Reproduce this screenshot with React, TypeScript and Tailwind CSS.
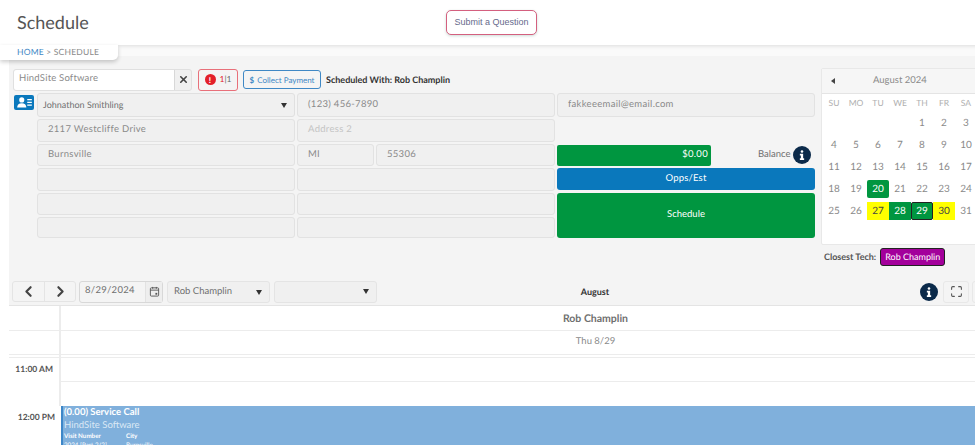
import { ChevronLeft, ChevronRight, Maximize, X } from "lucide-react";

function Field({ children, muted, className = "" }: { children?: string; muted?: boolean; className?: string }) {
  return (
    <div className={`flex items-center rounded-[3px] border border-[#e2e2e2] bg-[#f0f0f0] pl-[10px] text-[9.5px] tracking-[0.3px] ${muted ? "text-[#c4c4c4]" : "text-[#8a8a8a]"} ${className}`}>
      {children}
    </div>
  );
}

function Caret({ className = "" }: { className?: string }) {
  return <span className={`h-0 w-0 border-x-[3.5px] border-t-[5px] border-x-transparent border-t-[#333] ${className}`} />;
}

function InfoIcon() {
  return (
    <span className="flex size-[18px] shrink-0 items-center justify-center rounded-full bg-[#0b2a4a]">
      <svg viewBox="0 0 10 14" className="h-[10px] w-[8px]" fill="#fff">
        <circle cx="5" cy="2" r="1.8" />
        <path d="M2 5.4h4.6v6.2H8V14H2v-2.4h1.4V7.8H2z" />
      </svg>
    </span>
  );
}

const cells: { d: string; c?: string }[][] = [
  [{ d: "" }, { d: "" }, { d: "" }, { d: "" }, { d: "1" }, { d: "2" }, { d: "3" }],
  [{ d: "4" }, { d: "5" }, { d: "6" }, { d: "7" }, { d: "8" }, { d: "9" }, { d: "10" }],
  [{ d: "11" }, { d: "12" }, { d: "13" }, { d: "14" }, { d: "15" }, { d: "16" }, { d: "17" }],
  [{ d: "18" }, { d: "19" }, { d: "20", c: "rounded-[2px] bg-[#009640] text-white" }, { d: "21" }, { d: "22" }, { d: "23" }, { d: "24" }],
  [
    { d: "25" },
    { d: "26" },
    { d: "27", c: "bg-[#ffff00] text-[#444]" },
    { d: "28", c: "bg-[#009640] text-white" },
    { d: "29", c: "rounded-[2px] border border-[#222] bg-[#009640] text-white" },
    { d: "30", c: "bg-[#ffff00] text-[#444]" },
    { d: "31" },
  ],
];

function Calendar() {
  return (
    <div className="w-[170px] shrink-0">
      <div className="h-[177px] rounded-[2px] border border-[#e8e8e8] bg-white">
        <div className="flex h-[25px] items-center border-b border-[#e4e4e4] bg-[#f6f6f6] pl-[9px] text-[9.5px] text-[#8a8a8a]">
          <span className="h-0 w-0 border-y-[3px] border-r-[4px] border-y-transparent border-r-[#444]" />
          <span className="ml-[38px]">August 2024</span>
        </div>
        <div className="grid grid-cols-[repeat(7,22px)] pl-px pt-px">
          {["SU", "MO", "TU", "WE", "TH", "FR", "SA"].map((d) => (
            <div key={d} className="flex h-[16px] items-center justify-center text-[8.5px] text-[#b0b0b0]">{d}</div>
          ))}
        </div>
        <div className="grid grid-cols-[repeat(7,22px)] auto-rows-[18px] gap-y-1 pl-px pt-[3px]">
          {cells.flat().map((c, i) => (
            <div key={i} className={`flex items-center justify-center text-[10px] ${c.c ?? "text-[#8a8a8a]"}`}>{c.d}</div>
          ))}
        </div>
      </div>
      <div className="mt-[3px] flex items-center pl-[3px] text-[9px] font-bold text-[#555]">
        <span>Closest Tech:</span>
        <span className="ml-1 rounded-[3px] border border-[#222] bg-[#a3009b] px-[4px] py-px text-[9px] font-normal text-white">Rob Champlin</span>
      </div>
    </div>
  );
}

function CustomerForm() {
  return (
    <div className="flex w-[802px] shrink-0">
      <div className="w-6 shrink-0 pl-px pt-[2px]">
        <div className="flex h-[15px] w-[20px] items-center justify-center gap-px rounded-[2px] bg-[#0a78bc]">
          <svg viewBox="0 0 16 12" className="h-[11px] w-[15px]" fill="#fff">
            <circle cx="5" cy="3.2" r="2.8" />
            <path d="M0 11.5c0-3 2-4.6 5-4.6s5 1.6 5 4.6z" />
            <path d="M11 2.2h5v1.4h-5zM11 5.2h5v1.4h-5zM11 8.2h5v1.4h-5z" />
          </svg>
        </div>
      </div>
      <div className="grid w-[778px] grid-cols-[258px_258px_258px] grid-rows-[24px_23px_22px_23px_22px_21px] gap-x-[2px] gap-y-[2px]">
        <div className="flex items-center justify-between rounded-[3px] border border-[#e0e0e0] bg-[#f0f0f0] pl-[5px] pr-[7px] text-[9px] text-[#707070]">
          Johnathon Smithling
          <Caret />
        </div>
        <Field>(123) 456-7890</Field>
        <Field>fakkeeemail@email.com</Field>
        <Field>2117 Westcliffe Drive</Field>
        <Field muted>Address 2</Field>
        <div />
        <Field>Burnsville</Field>
        <div className="flex gap-[2px]">
          <Field className="w-[77px]">MI</Field>
          <Field className="flex-1">55306</Field>
        </div>
        <div className="flex items-center">
          <div className="flex h-[21px] w-[154px] items-center justify-end rounded-[2px] bg-[#009640] pr-[3px] text-[9.5px] tracking-[0.3px] text-white">$0.00</div>
          <span className="ml-[47px] w-[35px] text-[9.5px] text-[#707070]">Balance</span>
          <InfoIcon />
        </div>
        <Field />
        <Field />
        <div className="flex h-[22px] items-center justify-center rounded-[3px] bg-[#0a78bc] text-[9.5px] tracking-[0.2px] text-white">Opps/Est</div>
        <Field />
        <Field />
        <div className="row-span-2 flex items-center justify-center rounded-[3px] bg-[#009640] text-[9.5px] text-white">Schedule</div>
        <Field />
        <Field />
      </div>
    </div>
  );
}

function Toolbar() {
  return (
    <div className="flex h-[23px] items-center pl-[3px]">
      <div className="flex h-[21px] w-[64px] rounded-[3px] border border-[#e4e4e4] bg-[#f4f4f4] text-[#444]">
        <span className="flex w-[32px] items-center justify-center border-r border-[#e4e4e4]"><ChevronLeft size={17} strokeWidth={3} /></span>
        <span className="flex flex-1 items-center justify-center"><ChevronRight size={17} strokeWidth={3} /></span>
      </div>
      <div className="ml-[3px] flex h-[22px] w-[84px] items-center rounded-[3px] border border-[#d8d8d8] bg-[#f4f4f4]">
        <span className="flex-1 pl-[5px] text-[9.5px] tracking-[0.3px] text-[#707070]">8/29/2024</span>
        <span className="flex h-full w-[17px] items-center justify-center border-l border-[#e2e2e2] bg-[#eeeeee]">
          <svg viewBox="0 0 12 12" className="size-[11px]" fill="none" stroke="#555" strokeWidth="1">
            <rect x="1.5" y="2" width="9" height="9" rx="1" />
            <path d="M1.5 4.5h9M4 1v2M8 1v2" />
            <rect x="7" y="7.5" width="2" height="2" fill="#555" stroke="none" />
          </svg>
        </span>
      </div>
      <div className="ml-1 flex h-[22px] w-[103px] items-center justify-between rounded-[3px] border border-[#e4e4e4] bg-[#f0f0f0] pl-[6px] pr-[7px] pt-px text-[9.5px] text-[#707070]">
        Rob Champlin
        <Caret />
      </div>
      <div className="ml-1 flex h-[22px] w-[103px] items-center justify-end rounded-[3px] border border-[#e4e4e4] bg-[#f0f0f0] pr-[7px]">
        <Caret />
      </div>
      <div className="w-[436px] text-center text-[9px] font-bold text-[#333]">August</div>
      <div className="ml-[107px] flex items-center">
        <InfoIcon />
        <div className="ml-[5px] flex h-[22px] w-[26px] items-center justify-center rounded-[3px] border border-[#e8e8e8] bg-[#f4f4f4]">
          <Maximize size={13} strokeWidth={2} className="text-[#555]" />
        </div>
        <div className="ml-[3px] h-[22px] w-[26px] shrink-0 rounded-[3px] border border-[#e8e8e8] bg-[#f4f4f4]" />
      </div>
    </div>
  );
}

function ScheduleGrid() {
  return (
    <div className="grid grid-cols-[52px_1fr] border-t border-[#e4e4e4] bg-white">
      <div className="h-[25px] border-r-2 border-b border-[#ececec]" />
      <div className="flex h-[25px] items-center justify-center border-b border-[#ececec] pt-[3px] text-[10.5px] font-bold text-[#707070]">Rob Champlin</div>
      <div className="h-[24px] border-r-2 border-b border-[#ececec]" />
      <div className="flex h-[24px] items-center justify-center border-b border-[#ececec] text-[9.5px] text-[#8a8a8a]">Thu 8/29</div>
      <div className="h-[3px] border-r-2 border-b border-[#ececec]" />
      <div className="h-[3px] border-b border-[#ececec]" />
      <div className="h-[48px] whitespace-nowrap border-r-2 border-[#ececec] pr-[6px] pt-[5px] text-right text-[8.5px] font-bold text-[#555]">11:00 AM</div>
      <div className="h-[48px]">
        <div className="h-[24px] border-b border-[#ececec]" />
      </div>
      <div className="h-[39px] whitespace-nowrap pr-[6px] pt-[5px] text-right text-[8.5px] font-bold text-[#555]">12:00 PM</div>
      <div className="h-[39px] overflow-hidden border-l-2 border-[#3d87c8] bg-[#80b0dc] pl-px text-white">
        <div className="text-[9.5px] font-bold leading-[13px]">(0.00) Service Call</div>
        <div className="text-[9.5px] leading-[13px] text-[#dbe8f5]">HindSite Software</div>
        <div className="flex text-[6.25px] font-bold leading-[9px]">
          <div className="w-[62px]">Visit Number<div className="font-normal">2024 [Part 2/2]</div></div>
          <div>City<div className="font-normal">Burnsville</div></div>
        </div>
      </div>
    </div>
  );
}

export default function App() {
  return (
    <div className="h-[445px] w-[975px] overflow-hidden bg-white font-['Lato','Noto_Sans',sans-serif] [text-rendering:geometricPrecision]">
      <div className="w-[1130px]">
        <header className="relative z-10 flex h-[45px] items-center shadow-[0_1px_4px_rgba(0,0,0,0.12)]">
          <h1 className="ml-[17px] w-[429px] text-[18px] text-[#555]">Schedule</h1>
          <button className="flex h-[25px] w-[91px] items-center justify-center rounded-[5px] border border-[#d4607f] bg-white font-['Liberation_Sans',sans-serif] text-[9px] text-[#666a8c] shadow-[0_1px_3px_rgba(0,80,60,0.2)]">
            Submit a Question
          </button>
        </header>
        <div className="relative">
          <nav className="absolute left-0 top-0 z-20 flex h-[15px] w-[118px] items-center rounded-br-[5px] bg-white pl-[17px] text-[8.5px] tracking-[0.2px] text-[#8a8a8a] shadow-[0_2px_4px_rgba(0,0,0,0.2)]">
            <span className="text-[#3f88c5]">HOME</span>&nbsp;&gt; SCHEDULE
          </nav>
          <div className="h-[11px] bg-[#fafafa]" />
          <div className="ml-[9px] bg-[#f4f4f4] pt-[12px]">
            <div className="flex h-[195px] pl-1">
              <div>
                <div className="flex h-[23px] items-center">
                  <div className="flex h-[22px] w-[179px] rounded-[3px] border border-[#e0e0e0] bg-[#f0f0f0]">
                    <span className="flex w-[161px] items-center rounded-l-[3px] border-r border-[#d8d8d8] bg-white pl-[5px] text-[9.5px] tracking-[0.2px] text-[#8a8a8a]">HindSite Software</span>
                    <span className="flex flex-1 items-center justify-center"><X size={11} strokeWidth={3.5} className="text-[#444]" /></span>
                  </div>
                  <div className="ml-[6px] flex h-[22px] w-[40px] items-center justify-center gap-1 rounded-[3px] border border-[#e8707a] bg-[#f4f4f4] text-[8.5px] text-[#666]">
                    <span className="flex size-[11px] items-center justify-center rounded-full bg-[#e3202a] text-[8px] font-black leading-none text-white">!</span>
                    <span><span className="text-[#e3202a]">1</span>|1</span>
                  </div>
                  <div className="ml-[5px] flex h-[19px] w-[78px] items-center justify-center gap-[3px] rounded-[3px] border border-[#3f88c5] text-[8px] text-[#3f88c5]">
                    <span className="font-bold">$</span>Collect Payment
                  </div>
                  <span className="ml-[5px] text-[9px] font-bold text-[#333]">Scheduled With: Rob Champlin</span>
                </div>
                <div className="mt-[2px]"><CustomerForm /></div>
              </div>
              <div className="ml-[6px]"><Calendar /></div>
            </div>
            <div className="pt-[17px]"><Toolbar /></div>
            <div className="h-[2px]" />
          </div>
          <div className="ml-[9px]"><ScheduleGrid /></div>
        </div>
      </div>
    </div>
  );
}
